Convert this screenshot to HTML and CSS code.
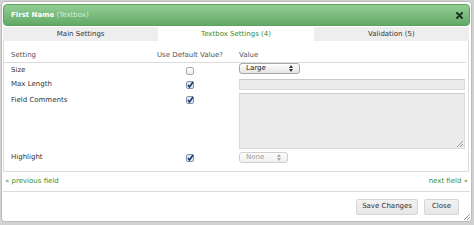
FILE: index.html
```html
<!DOCTYPE html>
<html>
<head>
<meta charset="utf-8">
<link rel="stylesheet" href="styles.css">
</head>
<body>
<div class="dialog">
  <div class="titlebar">
    <span class="title"><b>First Name</b> <span class="sub">(Textbox)</span></span>
    <svg class="close" width="7" height="7" viewBox="0 0 7 7"><path d="M1 1L6 6M6 1L1 6" stroke="#1d2f1d" stroke-width="1.9" stroke-linecap="round"/></svg>
  </div>
  <div class="tabs">
    <div class="tab">Main Settings</div>
    <div class="tab active">Textbox Settings (4)</div>
    <div class="tab">Validation (5)</div>
  </div>
  <div class="panel">
    <div class="row head">
      <div>Setting</div>
      <div class="mid">Use Default Value?</div>
      <div class="val">Value</div>
    </div>
    <div class="row r-size">
      <div class="lbl">Size</div>
      <div class="mid"><span class="cb"></span></div>
      <div class="val"><span class="select">Large<svg class="arr" width="4" height="7" viewBox="0 0 4 7"><path d="M0 3L2 0L4 3ZM0 4L2 7L4 4Z" fill="#333"/></svg></span></div>
    </div>
    <div class="row r-max">
      <div class="lbl">Max Length</div>
      <div class="mid"><svg class="cb-on" width="8" height="8" viewBox="0 0 8 8"><rect x="0.5" y="0.5" width="7" height="7" rx="1.5" fill="#dfe7f2" stroke="#7f93b3"/><path d="M2 4L3.5 6L7 1" fill="none" stroke="#1b3466" stroke-width="1.5"/></svg></div>
      <div class="val"><span class="input"></span></div>
    </div>
    <div class="row r-com">
      <div class="lbl">Field Comments</div>
      <div class="mid"><svg class="cb-on" width="8" height="8" viewBox="0 0 8 8"><rect x="0.5" y="0.5" width="7" height="7" rx="1.5" fill="#dfe7f2" stroke="#7f93b3"/><path d="M2 4L3.5 6L7 1" fill="none" stroke="#1b3466" stroke-width="1.5"/></svg></div>
      <div class="val"><span class="textarea"><svg class="tgrip" width="6" height="6" viewBox="0 0 6 6"><path d="M0 6L6 0M3 6L6 3" stroke="#888" stroke-width="0.8"/></svg></span></div>
    </div>
    <div class="row r-hl">
      <div class="lbl">Highlight</div>
      <div class="mid"><svg class="cb-on" width="8" height="8" viewBox="0 0 8 8"><rect x="0.5" y="0.5" width="7" height="7" rx="1.5" fill="#dfe7f2" stroke="#7f93b3"/><path d="M2 4L3.5 6L7 1" fill="none" stroke="#1b3466" stroke-width="1.5"/></svg></div>
      <div class="val"><span class="select disabled">None<svg class="arr" width="4" height="7" viewBox="0 0 4 7"><path d="M0 3L2 0L4 3ZM0 4L2 7L4 4Z" fill="#aaa"/></svg></span></div>
    </div>
  </div>
  <div class="nav">
    <span class="link">« previous field</span>
    <span class="link">next field »</span>
  </div>
  <div class="buttons">
    <span class="btn">Save Changes</span>
    <span class="btn close-btn">Close</span>
  </div>
  <svg class="grip" width="6" height="6" viewBox="0 0 6 6"><path d="M0 6L6 0M3 6L6 3" stroke="#777" stroke-width="0.8"/></svg>
</div>
</body>
</html>
```
FILE: styles.css
```css
html, body {
  margin: 0;
  padding: 0;
}
body {
  background: #d2d2d2;
  font-family: "DejaVu Sans", Verdana, sans-serif;
  font-size: 7px;
  line-height: 9px;
  color: #333;
}
.dialog {
  position: relative;
  width: 471px;
  height: 221px;
  margin: 1px 0 0 1px;
  box-sizing: border-box;
  border: 1px solid #bcbcbc;
  border-radius: 4px;
  background: #fff;
  padding: 2px 1px 0;
  display: flex;
  flex-direction: column;
}
.titlebar {
  height: 22px;
  box-sizing: border-box;
  border: 1px solid #5d9f61;
  border-radius: 4px;
  background: linear-gradient(#93ce95, #62a966);
  display: flex;
  align-items: center;
  justify-content: space-between;
  padding: 0 6px 0 7px;
  color: #fff;
}
.title b {
  font-weight: bold;
}
.sub {
  color: #d6eed6;
}
.tabs {
  display: flex;
  width: 466px;
  height: 14px;
  margin-top: 1px;
}
.tab {
  flex: 1;
  background: #eeeeee;
  text-align: center;
  line-height: 14px;
  color: #333;
}
.tab.active {
  background: #fff;
  color: #3b8b2c;
}
.panel {
  width: 466px;
  box-sizing: border-box;
  border: 1px solid #dcdcdc;
  border-top: 0;
}
.row {
  display: grid;
  grid-template-columns: 142px 74px 1fr;
  padding: 0 3px 0 7px;
  box-sizing: border-box;
  align-items: start;
}
.mid {
  text-align: center;
}
.val {
  padding-left: 12px;
}
.head {
  height: 22px;
  align-items: end;
  padding-bottom: 2px;
  border-bottom: 1px solid #dcdcdc;
  margin-right: 2px;
  color: #555;
}
.r-size { height: 15px; }
.r-max { height: 14px; }
.r-com { height: 57px; }
.r-hl { height: 22px; }
.lbl {
  padding-top: 3px;
}
.r-com .lbl, .r-hl .lbl { padding-top: 4px; }
.r-max .lbl { padding-top: 2px; }
.cb {
  display: inline-block;
  width: 6px;
  height: 6px;
  margin-top: 4px;
  border: 1px solid #a9a9a9;
  border-radius: 2px;
  background: linear-gradient(#fff, #ececec);
}
.cb-on {
  display: inline-block;
  vertical-align: top;
  margin-top: 4px;
}
.r-max .cb-on { margin-top: 3px; }
.r-hl .cb-on { margin-top: 5px; }
.select {
  position: relative;
  display: flex;
  align-items: center;
  width: 61px;
  height: 11px;
  box-sizing: border-box;
  padding-left: 6px;
  border: 1px solid #a8a8a8;
  border-radius: 3px;
  background: linear-gradient(#ffffff, #e4e4e4);
  color: #222;
}
.select .arr {
  position: absolute;
  right: 6px;
  top: 1px;
}
.select.disabled {
  width: 49px;
  margin-top: 3px;
  border-color: #cfcfcf;
  color: #9a9a9a;
  background: linear-gradient(#fdfdfd, #f0f0f0);
}
.input {
  display: block;
  height: 11px;
  margin-top: 1px;
  box-sizing: border-box;
  background: #ebebeb;
  border: 1px solid #dadada;
  border-top-color: #c9c9c9;
}
.textarea {
  position: relative;
  display: block;
  height: 56px;
  margin-top: 1px;
  box-sizing: border-box;
  background: #ebebeb;
  border: 1px solid #dadada;
  border-top-color: #c9c9c9;
}
.tgrip {
  position: absolute;
  right: 1px;
  bottom: 1px;
}
.nav {
  height: 20px;
  box-sizing: border-box;
  border-bottom: 1px solid #dcdcdc;
  display: flex;
  justify-content: space-between;
  align-items: center;
  padding: 0 2px 0 2px;
}
.link {
  color: #3d8d2e;
}
.buttons {
  flex: 1;
  display: flex;
  justify-content: flex-end;
  align-items: center;
  gap: 6px;
  padding-right: 11px;
}
.btn {
  display: flex;
  align-items: center;
  justify-content: center;
  height: 16px;
  box-sizing: border-box;
  padding: 0 5px;
  border: 1px solid #d6d6d6;
  border-radius: 2px;
  background: linear-gradient(#f2f2f2, #e6e6e6);
  color: #333;
}
.close-btn {
  min-width: 35px;
}
.grip {
  position: absolute;
  right: 1px;
  bottom: 1px;
}
```
